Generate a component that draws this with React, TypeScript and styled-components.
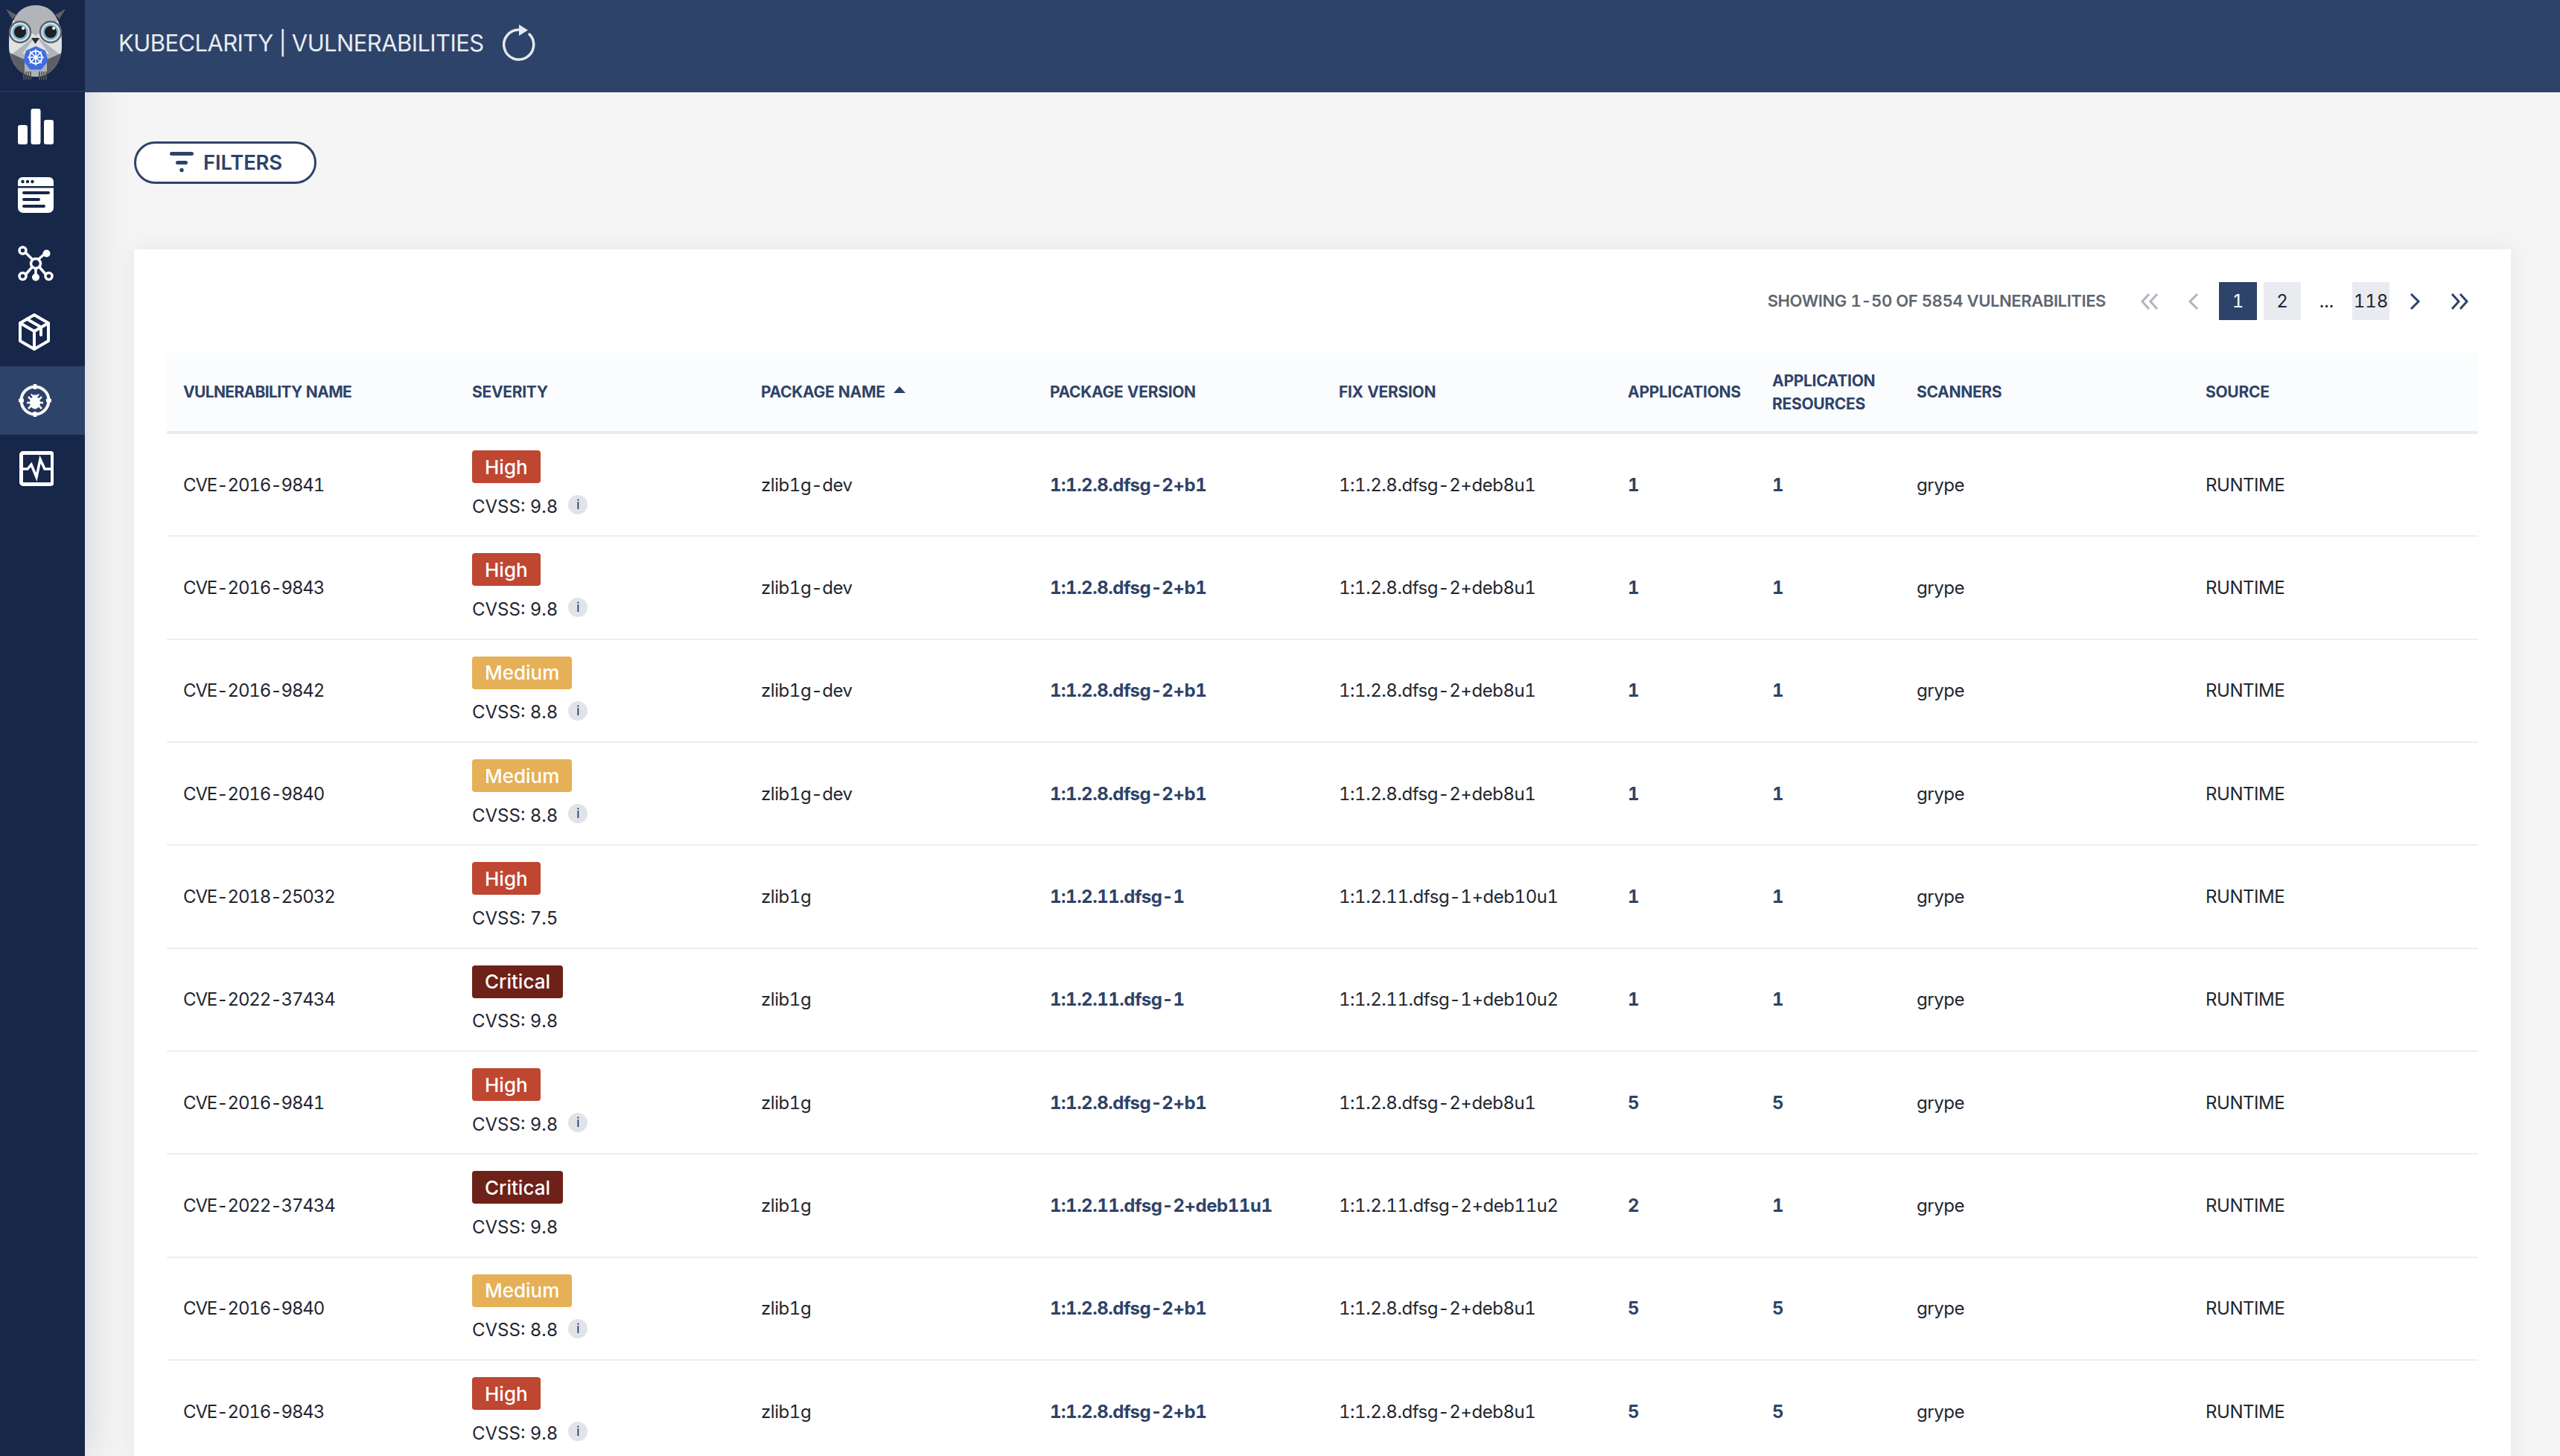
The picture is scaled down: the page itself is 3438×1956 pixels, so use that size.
import React from "react";
import styled, { createGlobalStyle } from "styled-components";

const Global = createGlobalStyle`
  html, body { margin: 0; padding: 0; height: 100%; overflow: hidden; background: #f5f5f5; }
  body { font-family: Inter, "Liberation Sans", sans-serif; color: #1f2630; font-variant-numeric: tabular-nums; }
  * { box-sizing: border-box; }
`;

const NAVY = "#2e4369";
const DARK = "#17274a";

const Shell = styled.div`display: flex; width: 3438px; height: 1956px; overflow: hidden;`;
const Sidebar = styled.nav`
  width: 114px; flex: none; background: ${DARK}; display: flex; flex-direction: column;
  box-shadow: 0 0 60px rgba(40, 50, 80, 0.2); position: relative; z-index: 2;
`;
const LogoBox = styled.div`height: 124px; border-bottom: 2px solid #22345a; display: flex;`;
const NavItem = styled.div<{ $active?: boolean }>`
  height: 92px; display: flex; align-items: center; justify-content: flex-start; padding-left: 24px;
  background: ${(p) => (p.$active ? NAVY : "transparent")};
`;
const Main = styled.main`flex: 1; min-width: 0; display: flex; flex-direction: column;`;
const TopBar = styled.header`
  height: 124px; flex: none; background: ${NAVY}; display: flex; align-items: center;
  padding: 0 0 10px 45px; gap: 25px; position: relative; z-index: 3;
`;
const Title = styled.h1`
  margin: 0; font-size: 31px; font-weight: 400; color: #e8ecf2; letter-spacing: -0.6px; white-space: nowrap;
`;
const Content = styled.div`flex: 1; padding: 66px 66px 0; display: flex; flex-direction: column; align-items: flex-start; min-height: 0;`;
const FilterButton = styled.button`
  flex: none; width: 245px; height: 57px; border: 3px solid ${NAVY}; border-radius: 29px; background: #fff; color: ${NAVY};
  font: 600 27.5px Inter, sans-serif; display: flex; align-items: center; justify-content: flex-start;
  padding: 0 0 2px 45px; gap: 13px; letter-spacing: -0.2px;
`;
const Card = styled.section`
  margin-top: 88px; width: 100%; flex: 1; background: #fff; padding: 44px 44px 0;
  box-shadow: 0 0 30px rgba(30, 40, 70, 0.07);
`;
const PagerRow = styled.div`height: 51px; display: flex; align-items: center; justify-content: flex-end; margin-bottom: 44px; padding-right: 12px;`;
const Showing = styled.span`font-size: 22px; font-weight: 600; color: #5e6671; margin: -2px 46px 0 0; letter-spacing: -0.4px;`;
const Chevron = styled.span<{ $w: number; $mr: number }>`
  display: flex; width: ${(p) => p.$w}px; margin-right: ${(p) => p.$mr}px; justify-content: center;
`;
const PageBtn = styled.span<{ $active?: boolean; $plain?: boolean; $mr?: number }>`
  width: ${(p) => (p.$plain ? "69px" : p.$active ? "51px" : "50px")}; height: 51px; display: flex; align-items: center; justify-content: center;
  font-size: 24px; margin-right: ${(p) => p.$mr ?? 0}px;
  background: ${(p) => (p.$active ? NAVY : p.$plain ? "transparent" : "#e9ebf0")};
  color: ${(p) => (p.$active ? "#fff" : "#1f2630")};
`;
const Grid = styled.div`
  display: grid; grid-template-columns: 2fr 2fr 2fr 2fr 2fr 1fr 1fr 2fr 2fr;
`;
const HeadRow = styled(Grid)`
  height: 109px; background: #fbfcfe; border-bottom: 4px solid #e9ebf0; align-items: center;
`;
const HeadCell = styled.div<{ $tight?: boolean }>`
  padding-left: 22px; font-size: 21px; font-weight: 700; color: ${NAVY}; line-height: 31px;
  display: flex; align-items: center; gap: 11px; letter-spacing: ${(p) => (p.$tight ? "-0.65px" : "-0.3px")}; white-space: pre-line;
`;
const SortMark = styled.span`display: flex; margin-top: -6px;`;
const Row = styled(Grid)`height: 138.35px; border-bottom: 2px solid #eceef2;`;
const Cell = styled.div`
  padding-left: 22px; font-size: 24px; display: flex; align-items: center; color: #1f2630; white-space: nowrap;
  letter-spacing: -0.45px;
`;
const CveCell = styled(Cell)`letter-spacing: -1.15px;`;
const LinkCell = styled(Cell)`font-weight: 700; color: ${NAVY};`;
const SeverityCell = styled.div`padding: 22px 0 0 22px; display: flex; flex-direction: column; align-items: flex-start;`;
const Badge = styled.span<{ $c: string }>`
  height: 44px; padding: 0 17px; border-radius: 4px; background: ${(p) => p.$c}; color: #fff;
  font-size: 26px; font-weight: 500; display: flex; align-items: center;
`;
const Cvss = styled.div`margin-top: 16px; height: 30px; font-size: 24px; display: flex; align-items: center; gap: 14px;`;
const Info = styled.span`
  width: 26px; height: 26px; border-radius: 50%; background: #e1e3e8; color: #1f2630;
  font-size: 17px; display: flex; align-items: center; justify-content: center; margin-top: -4px;
`;

const Owl = () => (
  <svg width="114" height="122" viewBox="0 0 114 122">
    <defs>
      <clipPath id="owlBody"><path d="M48 7C24 7 12 28 12 60c0 26 16 43 36 43s35-17 35-43C83 28 72 7 48 7z" /></clipPath>
    </defs>
    <path d="M8 12l14 8-6 6 4 6zM88 12l-14 8 6 6-4 6z" fill="#5d6268" />
    <g clipPath="url(#owlBody)">
      <rect x="0" y="0" width="100" height="110" fill="#b1b5ba" />
      <path d="M0 15L48 48 0 85zM96 15L48 48l48 37z" fill="#dfe2e4" />
      <path d="M0 110V65L33 80v30zM96 110V65L63 80v30z" fill="#5c6066" />
      <path d="M48 48L30 72h36z" fill="#dfe2e4" />
      <rect x="34" y="70" width="28" height="40" fill="#aeb2b7" />
    </g>
    <g>
      <circle cx="27" cy="43" r="14" fill="#dfe2e4" stroke="#5f6469" strokeWidth="2.5" />
      <circle cx="27" cy="43" r="10.5" fill="#6db3e0" />
      <circle cx="27" cy="43" r="8" fill="#1e1f21" />
      <circle cx="31" cy="38" r="2" fill="#fff" />
      <circle cx="68" cy="43" r="14" fill="#dfe2e4" stroke="#5f6469" strokeWidth="2.5" />
      <circle cx="68" cy="43" r="10.5" fill="#6db3e0" />
      <circle cx="68" cy="43" r="8" fill="#1e1f21" />
      <circle cx="72" cy="38" r="2" fill="#fff" />
    </g>
    <path d="M42 51h11l-5.500 8z" fill="#2a2c30" />
    <path d="M48 62l13 6 3.500 14-9 11.500H40.500l-9-11.500L35 68z" fill="#3f6ce0" />
    <g fill="none" stroke="#fff">
      <circle cx="48" cy="77" r="8.500" strokeWidth="2" />
      <path d="M48 66v22M37 77h22M40 69l16 16M56 69L40 85" strokeWidth="1.600" />
    </g>
    <path d="M32 96v11M35 96v11M38 96v11M41 96v11M53 96v11M56 96v11M59 96v11M62 96v11" stroke="#50555b" strokeWidth="1.800" />
  </svg>
);

const IconChart = () => (
  <svg width="48" height="48" viewBox="0 0 48 48" fill="#fff">
    <rect x="0" y="22" width="13" height="26" rx="3" />
    <rect x="17.500" y="0" width="13" height="48" rx="3" />
    <rect x="35" y="15" width="13" height="33" rx="3" />
  </svg>
);
const IconWindow = () => (
  <svg width="48" height="50" viewBox="0 0 48 50">
    <path d="M0 13V7a6 6 0 0 1 6-6h36a6 6 0 0 1 6 6v6z" fill="#fff" />
    <path d="M0 15.500h48V42a7 7 0 0 1-7 7H7a7 7 0 0 1-7-7z" fill="#fff" />
    <g fill={DARK}><circle cx="6.500" cy="7" r="2.200" /><circle cx="13" cy="7" r="2.200" /><circle cx="19.500" cy="7" r="2.200" /></g>
    <path d="M8 22h33M8 31h20M8 40h27" stroke={DARK} strokeWidth="4" strokeLinecap="round" />
  </svg>
);
const IconNetwork = () => (
  <svg width="48" height="48" viewBox="0 0 48 48" fill="none" stroke="#fff" strokeWidth="3.500">
    <path d="M11 10l8 8M36 11l-8 7M11 38l8-9M24 32v8M37 38l-8-9" />
    <circle cx="24" cy="24" r="6.500" />
    <circle cx="6.500" cy="6.500" r="4.500" />
    <circle cx="38.500" cy="10.500" r="5" fill="#fff" stroke="none" />
    <circle cx="6.500" cy="41" r="4.500" />
    <circle cx="24" cy="42.500" r="5" fill="#fff" stroke="none" />
    <circle cx="41.500" cy="41" r="4.500" />
  </svg>
);
const IconBox = () => (
  <svg width="48" height="50" viewBox="0 0 48 50" fill="none" stroke="#fff" strokeWidth="4" strokeLinejoin="round" strokeLinecap="round">
    <path d="M22 2l19 11v24L22 48 3 37V13z" />
    <path d="M3 13l19 11 19-11M22 24v24" />
    <path d="M12 7.500l19 11M31 18.500V29" />
  </svg>
);
const IconBug = () => (
  <svg width="46" height="46" viewBox="0 0 46 46" fill="none" stroke="#fff">
    <circle cx="23" cy="23" r="18.500" strokeWidth="4" />
    <path d="M23 1v7M23 38v7M1 23h7M38 23h7" strokeWidth="4.500" />
    <ellipse cx="23" cy="26" rx="7" ry="8.500" fill="#fff" stroke="none" />
    <path d="M18 15c0 5 10 5 10 0v-1l-2 2h-6l-2-2z" fill="#fff" strokeWidth="1" />
    <path d="M14 18l4 4M32 18l-4 4M12 26h6M34 26h-6M14 34l4-4M32 34l-4-4" strokeWidth="2.500" />
  </svg>
);
const IconActivity = () => (
  <svg width="48" height="48" viewBox="0 0 48 48" fill="none" stroke="#fff">
    <rect x="4.500" y="2.500" width="42" height="42" rx="2.500" strokeWidth="5" />
    <path d="M6 24h7l5-6 7 17 5-24 6 13h9" strokeWidth="3.500" strokeLinejoin="miter" />
  </svg>
);
const IconRefresh = () => (
  <svg width="44" height="50" viewBox="0 0 44 50" fill="none">
    <path d="M22 8a20 20 0 1 0 14 6" stroke="#e4e8ef" strokeWidth="3.500" strokeLinecap="round" />
    <path d="M22 1v15l12-7.500z" fill="#e4e8ef" />
  </svg>
);
const IconFilter = () => (
  <svg width="32" height="28" viewBox="0 0 32 28" fill={NAVY}>
    <rect x="0" y="0" width="32" height="5" rx="2.500" />
    <rect x="8" y="12" width="16" height="5" rx="2.500" />
    <circle cx="16" cy="24.500" r="2.700" />
  </svg>
);
const Chev = ({ d, color, w = 18 }: { d: string; color: string; w?: number }) => (
  <svg width={w} height="24" viewBox={`0 0 ${w} 24`} fill="none" stroke={color} strokeWidth="3"><path d={d} /></svg>
);
const SortUp = () => (
  <svg width="16" height="9" viewBox="0 0 16 9" fill={NAVY}><path d="M8 0l8 9H0z" /></svg>
);

const HIGH = "#bf4631";
const MEDIUM = "#e5b057";
const CRITICAL = "#6e2118";

type Sev = { label: string; color: string };
const S: Record<string, Sev> = {
  h: { label: "High", color: HIGH },
  m: { label: "Medium", color: MEDIUM },
  c: { label: "Critical", color: CRITICAL },
};

const rows: { cve: string; sev: string; cvss: string; info: boolean; pkg: string; ver: string; fix: string; apps: number; res: number }[] = [
  { cve: "CVE-2016-9841", sev: "h", cvss: "9.8", info: true, pkg: "zlib1g-dev", ver: "1:1.2.8.dfsg-2+b1", fix: "1:1.2.8.dfsg-2+deb8u1", apps: 1, res: 1 },
  { cve: "CVE-2016-9843", sev: "h", cvss: "9.8", info: true, pkg: "zlib1g-dev", ver: "1:1.2.8.dfsg-2+b1", fix: "1:1.2.8.dfsg-2+deb8u1", apps: 1, res: 1 },
  { cve: "CVE-2016-9842", sev: "m", cvss: "8.8", info: true, pkg: "zlib1g-dev", ver: "1:1.2.8.dfsg-2+b1", fix: "1:1.2.8.dfsg-2+deb8u1", apps: 1, res: 1 },
  { cve: "CVE-2016-9840", sev: "m", cvss: "8.8", info: true, pkg: "zlib1g-dev", ver: "1:1.2.8.dfsg-2+b1", fix: "1:1.2.8.dfsg-2+deb8u1", apps: 1, res: 1 },
  { cve: "CVE-2018-25032", sev: "h", cvss: "7.5", info: false, pkg: "zlib1g", ver: "1:1.2.11.dfsg-1", fix: "1:1.2.11.dfsg-1+deb10u1", apps: 1, res: 1 },
  { cve: "CVE-2022-37434", sev: "c", cvss: "9.8", info: false, pkg: "zlib1g", ver: "1:1.2.11.dfsg-1", fix: "1:1.2.11.dfsg-1+deb10u2", apps: 1, res: 1 },
  { cve: "CVE-2016-9841", sev: "h", cvss: "9.8", info: true, pkg: "zlib1g", ver: "1:1.2.8.dfsg-2+b1", fix: "1:1.2.8.dfsg-2+deb8u1", apps: 5, res: 5 },
  { cve: "CVE-2022-37434", sev: "c", cvss: "9.8", info: false, pkg: "zlib1g", ver: "1:1.2.11.dfsg-2+deb11u1", fix: "1:1.2.11.dfsg-2+deb11u2", apps: 2, res: 1 },
  { cve: "CVE-2016-9840", sev: "m", cvss: "8.8", info: true, pkg: "zlib1g", ver: "1:1.2.8.dfsg-2+b1", fix: "1:1.2.8.dfsg-2+deb8u1", apps: 5, res: 5 },
  { cve: "CVE-2016-9843", sev: "h", cvss: "9.8", info: true, pkg: "zlib1g", ver: "1:1.2.8.dfsg-2+b1", fix: "1:1.2.8.dfsg-2+deb8u1", apps: 5, res: 5 },
];

export default function App() {
  return (
    <Shell>
      <Global />
      <Sidebar>
        <LogoBox><Owl /></LogoBox>
        <NavItem><IconChart /></NavItem>
        <NavItem><IconWindow /></NavItem>
        <NavItem><IconNetwork /></NavItem>
        <NavItem><IconBox /></NavItem>
        <NavItem $active><IconBug /></NavItem>
        <NavItem><IconActivity /></NavItem>
      </Sidebar>
      <Main>
        <TopBar>
          <Title>KUBECLARITY | VULNERABILITIES</Title>
          <IconRefresh />
        </TopBar>
        <Content>
          <FilterButton><IconFilter />FILTERS</FilterButton>
          <Card>
            <PagerRow>
              <Showing>SHOWING 1-50 OF 5854 VULNERABILITIES</Showing>
              <Chevron $w={26} $mr={38}><Chev w={26} color="#b0b5bd" d="M12 2L3 12l9 10M23 2l-9 10 9 10" /></Chevron>
              <Chevron $w={16} $mr={26}><Chev w={16} color="#b0b5bd" d="M13 2L3 12l10 10" /></Chevron>
              <PageBtn $active $mr={9}>1</PageBtn>
              <PageBtn>2</PageBtn>
              <PageBtn $plain>...</PageBtn>
              <PageBtn $mr={26}>118</PageBtn>
              <Chevron $w={16} $mr={39}>
                <Chev w={16} color={NAVY} d="M3 2l10 10L3 22" />
              </Chevron>
              <Chevron $w={26} $mr={0}><Chev w={26} color={NAVY} d="M3 2l9 10-9 10M14 2l9 10-9 10" /></Chevron>
            </PagerRow>
            <HeadRow>
              <HeadCell $tight>VULNERABILITY NAME</HeadCell>
              <HeadCell>SEVERITY</HeadCell>
              <HeadCell>PACKAGE NAME<SortMark><SortUp /></SortMark></HeadCell>
              <HeadCell>PACKAGE VERSION</HeadCell>
              <HeadCell>FIX VERSION</HeadCell>
              <HeadCell>APPLICATIONS</HeadCell>
              <HeadCell>{"APPLICATION\nRESOURCES"}</HeadCell>
              <HeadCell>SCANNERS</HeadCell>
              <HeadCell>SOURCE</HeadCell>
            </HeadRow>
            {rows.map((r, i) => (
              <Row key={i}>
                <CveCell>{r.cve}</CveCell>
                <SeverityCell>
                  <Badge $c={S[r.sev].color}>{S[r.sev].label}</Badge>
                  <Cvss>CVSS: {r.cvss}{r.info && <Info>i</Info>}</Cvss>
                </SeverityCell>
                <Cell>{r.pkg}</Cell>
                <LinkCell>{r.ver}</LinkCell>
                <Cell>{r.fix}</Cell>
                <LinkCell>{r.apps}</LinkCell>
                <LinkCell>{r.res}</LinkCell>
                <Cell>grype</Cell>
                <Cell>RUNTIME</Cell>
              </Row>
            ))}
          </Card>
        </Content>
      </Main>
    </Shell>
  );
}
